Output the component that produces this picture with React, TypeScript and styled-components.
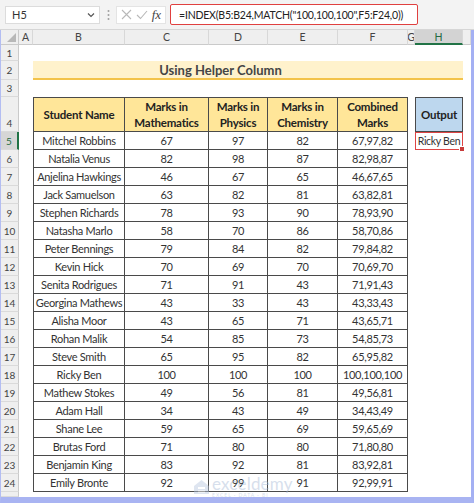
import React from 'react';
import styled, { createGlobalStyle } from 'styled-components';

const Global = createGlobalStyle`
  html, body { margin: 0; padding: 0; background: #ffffff; }
  body { font-family: Lato, "Liberation Sans", Arial, sans-serif; }
`;

const COLS = '18px 14px 92px 84px 59px 70px 70px 7px 48px 1fr';
const ROWS = '15px 16px 19px 17px 35px repeat(20, 18px) 5px';
const LINE = '#4a4a4a';

const Page = styled.div`
  width: 474px;
  height: 503px;
  overflow: hidden;
  background: #ffffff;
`;

const FormulaBar = styled.div`
  height: 30px;
  box-sizing: border-box;
  background: #f3f3f3;
  border-bottom: 1px solid #d6d6d6;
  display: flex;
  align-items: center;
  padding: 0 0 0 5px;
`;

const NameBox = styled.div`
  width: 95px;
  height: 18px;
  box-sizing: border-box;
  background: #ffffff;
  border: 1px solid #dcdcdc;
  display: flex;
  align-items: center;
  justify-content: space-between;
  padding: 0 4px 0 6px;
  font-size: 11px;
  color: #333;
`;

const Sep = styled.div`
  width: 16px;
  display: flex;
  justify-content: center;
`;

const FnBox = styled.div`
  width: 50px;
  height: 18px;
  box-sizing: border-box;
  background: #ffffff;
  border: 1px solid #e4e4e4;
  display: flex;
  align-items: center;
  justify-content: space-around;
  padding: 0 2px;
`;

const Fx = styled.span`
  font-family: "Liberation Serif", "DejaVu Serif", serif;
  font-style: italic;
  font-size: 13px;
  color: #444;
`;

const FormulaInput = styled.div`
  margin-left: 4px;
  width: 248px;
  height: 21px;
  box-sizing: border-box;
  background: #ffffff;
  border: 1.5px solid #e0403f;
  border-radius: 2px;
  display: flex;
  align-items: center;
  padding-left: 8px;
  font-size: 10.5px;
  letter-spacing: -0.2px;
  color: #222;
  white-space: nowrap;
`;

const Sheet = styled.div`
  position: relative;
  display: grid;
  grid-template-columns: ${COLS};
  grid-template-rows: ${ROWS};
  border-left: 1px solid #b3bdf2;
  border-right: 3px solid #a4b0f3;
  border-bottom: 6px solid #a9b4f2;
  background: #ffffff;
`;

const ColHead = styled.div<{ $active?: boolean }>`
  box-sizing: border-box;
  background: ${p => (p.$active ? '#d3d3d3' : '#efefef')};
  border-right: 1px solid #d8d8d8;
  border-bottom: ${p => (p.$active ? '2px solid #217346' : '1px solid #cacaca')};
  display: flex;
  align-items: center;
  justify-content: center;
  font-size: 10.5px;
  color: ${p => (p.$active ? '#236b43' : '#444')};
  overflow: hidden;
  white-space: nowrap;
`;

const Corner = styled(ColHead)`
  justify-content: flex-end;
  align-items: flex-end;
  padding: 0 2px 2px 0;
  border-right: 1px solid #cacaca;
`;

const RowHead = styled.div<{ $active?: boolean; $bottom?: boolean }>`
  box-sizing: border-box;
  background: ${p => (p.$active ? '#d6d6d6' : '#efefef')};
  border-bottom: 1px solid #dadada;
  border-right: ${p => (p.$active ? '2px solid #217346' : '1px solid #cacaca')};
  display: flex;
  align-items: ${p => (p.$bottom ? 'flex-end' : 'center')};
  justify-content: center;
  padding-bottom: ${p => (p.$bottom ? '2px' : '0')};
  font-size: 10px;
  color: ${p => (p.$active ? '#236b43' : '#444')};
`;

const Blank = styled.div``;

const Title = styled.div`
  grid-column: span 7;
  box-sizing: border-box;
  background: #fff2cc;
  border-bottom: 2px solid #f3c34a;
  display: flex;
  align-items: center;
  justify-content: center;
  padding-right: 55px;
  font-weight: 700;
  font-size: 13px;
  color: #454545;
`;

const TH = styled.div<{ $first?: boolean }>`
  box-sizing: border-box;
  background: #ffe699;
  border-top: 1px solid ${LINE};
  border-right: 1px solid ${LINE};
  border-bottom: 1px solid ${LINE};
  border-left: ${p => (p.$first ? `1px solid ${LINE}` : 'none')};
  display: flex;
  align-items: center;
  justify-content: center;
  text-align: center;
  font-weight: 700;
  font-size: 11.5px;
  letter-spacing: -0.2px;
  line-height: 16px;
  color: #222;
`;

const TD = styled.div<{ $first?: boolean }>`
  box-sizing: border-box;
  border-right: 1px solid ${LINE};
  border-bottom: 1px solid ${LINE};
  border-left: ${p => (p.$first ? `1px solid ${LINE}` : 'none')};
  display: flex;
  align-items: center;
  justify-content: center;
  font-size: 11px;
  letter-spacing: -0.3px;
  color: #333;
  white-space: nowrap;
`;

const OutHead = styled(TH)`
  background: #bdd7ee;
  border-left: 1px solid ${LINE};
`;

const OutCell = styled.div`
  position: relative;
  box-sizing: border-box;
  border: 1.5px solid #dd4545;
  display: flex;
  align-items: center;
  justify-content: center;
  font-size: 10.5px;
  letter-spacing: -0.3px;
  color: #333;
  white-space: nowrap;
  &::after {
    content: '';
    position: absolute;
    right: -3px;
    bottom: -3px;
    width: 4px;
    height: 4px;
    background: #c73a3a;
    border: 1px solid #fff;
  }
`;

const Watermark = styled.div`
  position: absolute;
  left: 192px;
  top: 445px;
  display: flex;
  align-items: center;
  gap: 2px;
  opacity: 0.45;
  pointer-events: none;
`;

const WmText = styled.div`
  display: flex;
  flex-direction: column;
  line-height: 1;
`;

const WmName = styled.span`
  font-size: 17px;
  color: #a8bad6;
  letter-spacing: 0.2px;
`;

const WmTag = styled.span`
  font-size: 5px;
  color: #a8bad6;
  letter-spacing: 1px;
  margin-top: 1px;
`;

type Rec = [string, number, number, number];

const DATA: Rec[] = [
  ['Mitchel Robbins', 67, 97, 82],
  ['Natalia Venus', 82, 98, 87],
  ['Anjelina Hawkings', 46, 67, 65],
  ['Jack Samuelson', 63, 82, 81],
  ['Stephen Richards', 78, 93, 90],
  ['Natasha Marlo', 58, 70, 86],
  ['Peter Bennings', 79, 84, 82],
  ['Kevin Hick', 70, 69, 70],
  ['Senita Rodrigues', 71, 91, 43],
  ['Georgina Mathews', 43, 33, 43],
  ['Alisha Moor', 43, 65, 71],
  ['Rohan Malik', 54, 85, 73],
  ['Steve Smith', 65, 95, 82],
  ['Ricky Ben', 100, 100, 100],
  ['Mathew Stokes', 49, 56, 81],
  ['Adam Hall', 34, 43, 49],
  ['Shane Lee', 59, 65, 69],
  ['Brutas Ford', 71, 80, 80],
  ['Benjamin King', 83, 92, 81],
  ['Emily Bronte', 92, 99, 91],
];

const LETTERS = ['A', 'B', 'C', 'D', 'E', 'F', 'G', 'H', ''];

function blanks(n: number, key: string) {
  return Array.from({ length: n }, (_, i) => <Blank key={`${key}-${i}`} />);
}

export default function App() {
  return (
    <Page>
      <Global />
      <FormulaBar>
        <NameBox>
          <span>H5</span>
          <svg width="8" height="6" viewBox="0 0 8 6">
            <path d="M1 1.5 L4 4.5 L7 1.5" fill="none" stroke="#555" strokeWidth="1.2" />
          </svg>
        </NameBox>
        <Sep>
          <svg width="3" height="12" viewBox="0 0 3 12">
            <circle cx="1.5" cy="2" r="1" fill="#a0a0a0" />
            <circle cx="1.5" cy="6" r="1" fill="#a0a0a0" />
            <circle cx="1.5" cy="10" r="1" fill="#a0a0a0" />
          </svg>
        </Sep>
        <FnBox>
          <svg width="11" height="11" viewBox="0 0 11 11">
            <path d="M1 1 L10 10 M10 1 L1 10" stroke="#b8b8b8" strokeWidth="1.1" />
          </svg>
          <svg width="12" height="10" viewBox="0 0 12 10">
            <path d="M1 5 L4.5 8.5 L11 1" fill="none" stroke="#b8b8b8" strokeWidth="1.1" />
          </svg>
          <Fx>fx</Fx>
        </FnBox>
        <FormulaInput>=INDEX(B5:B24,MATCH("100,100,100",F5:F24,0))</FormulaInput>
      </FormulaBar>

      <Sheet>
        <Corner>
          <svg width="9" height="9" viewBox="0 0 9 9">
            <path d="M9 0 L9 9 L0 9 Z" fill="#b8b8b8" />
          </svg>
        </Corner>
        {LETTERS.map((l, i) => (
          <ColHead key={`c${i}`} $active={l === 'H'}>{l}</ColHead>
        ))}

        <RowHead>1</RowHead>
        {blanks(9, 'r1')}

        <RowHead>2</RowHead>
        <Blank />
        <Title>Using Helper Column</Title>
        <Blank />

        <RowHead>3</RowHead>
        {blanks(9, 'r3')}

        <RowHead $bottom>4</RowHead>
        <Blank />
        <TH $first>Student Name</TH>
        <TH>Marks in<br />Mathematics</TH>
        <TH>Marks in<br />Physics</TH>
        <TH>Marks in<br />Chemistry</TH>
        <TH>Combined<br />Marks</TH>
        <Blank />
        <OutHead>Output</OutHead>
        <Blank />

        {DATA.map((d, i) => {
          const r = i + 5;
          return (
            <React.Fragment key={`row${r}`}>
              <RowHead $active={r === 5}>{r}</RowHead>
              <Blank />
              <TD $first>{d[0]}</TD>
              <TD>{d[1]}</TD>
              <TD>{d[2]}</TD>
              <TD>{d[3]}</TD>
              <TD>{`${d[1]},${d[2]},${d[3]}`}</TD>
              <Blank />
              {r === 5 ? <OutCell>Ricky Ben</OutCell> : <Blank />}
              <Blank />
            </React.Fragment>
          );
        })}

        <RowHead />
        {blanks(9, 'r25')}

        <Watermark>
          <svg width="17" height="16" viewBox="0 0 17 16">
            <path d="M1 7 L8.5 1 L16 7 L16 15 L1 15 Z" fill="#b7c6de" />
            <rect x="5" y="8" width="7" height="2" fill="#ffffff" />
            <rect x="5" y="11.5" width="7" height="2" fill="#ffffff" />
          </svg>
          <WmText>
            <WmName>exceldemy</WmName>
            <WmTag>EXCEL · DATA · BI</WmTag>
          </WmText>
        </Watermark>
      </Sheet>
    </Page>
  );
}
